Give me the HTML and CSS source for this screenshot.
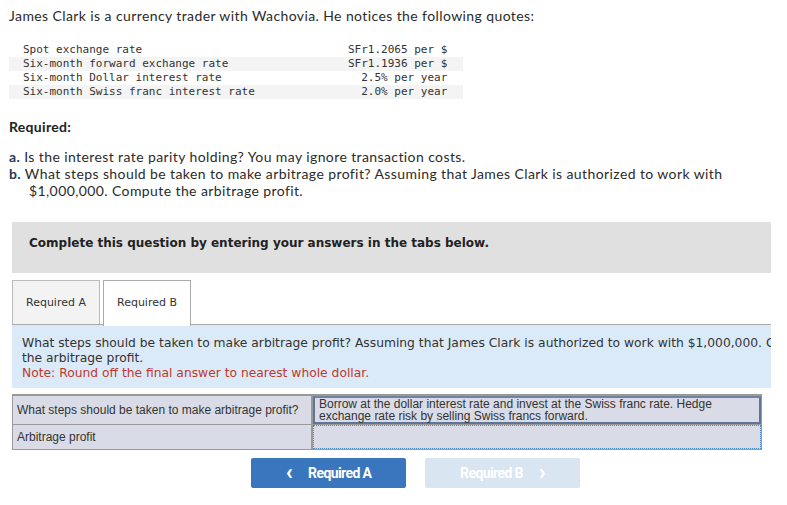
FILE: index.html
```html
<!DOCTYPE html>
<html>
<head>
<meta charset="utf-8">
<link rel="stylesheet" href="styles.css">
</head>
<body>
<div class="page">
  <p class="intro">James Clark is a currency trader with Wachovia. He notices the following quotes:</p>
  <div class="quotes">
    <div class="qrow"><span class="qlabel">Spot exchange rate</span><span class="qval">SFr1.2065 per $</span></div>
    <div class="qrow alt"><span class="qlabel">Six-month forward exchange rate</span><span class="qval">SFr1.1936 per $</span></div>
    <div class="qrow"><span class="qlabel">Six-month Dollar interest rate</span><span class="qval">  2.5% per year</span></div>
    <div class="qrow alt"><span class="qlabel">Six-month Swiss franc interest rate</span><span class="qval">  2.0% per year</span></div>
  </div>
  <p class="req-title">Required:</p>
  <ol class="req-list">
    <li><b>a.</b> Is the interest rate parity holding? You may ignore transaction costs.</li>
    <li><b>b.</b> What steps should be taken to make arbitrage profit? Assuming that James Clark is authorized to work with $1,000,000. Compute the arbitrage profit.</li>
  </ol>
  <div class="panel">
    <div class="instruct">Complete this question by entering your answers in the tabs below.</div>
    <div class="tabs">
      <div class="tab">Required A</div>
      <div class="tab active">Required B</div>
    </div>
    <div class="prompt">
      <div class="prompt-inner">
        What steps should be taken to make arbitrage profit? Assuming that James Clark is authorized to work with $1,000,000. Compute the arbitrage profit.
        <div class="note">Note: Round off the final answer to nearest whole dollar.</div>
      </div>
    </div>
    <div class="answers">
      <div class="arow">
        <div class="acell label">What steps should be taken to make arbitrage profit?</div>
        <div class="acell value sel">Borrow at the dollar interest rate and invest at the Swiss franc rate. Hedge exchange rate risk by selling Swiss francs forward.</div>
      </div>
      <div class="arow">
        <div class="acell label">Arbitrage profit</div>
        <div class="acell value input"></div>
      </div>
    </div>
    <div class="nav">
      <button class="btn prev"><span class="chev">&lsaquo;</span>Required A</button>
      <button class="btn next">Required B<span class="chev">&rsaquo;</span></button>
    </div>
  </div>
</div>
</body>
</html>
```
FILE: styles.css
```css
html, body { margin: 0; padding: 0; background: #fff; }
.page { padding: 7px 0 0 9px; color: #333; font-family: Lato, "Open Sans", sans-serif; }
.intro { margin: 0; font-size: 14px; letter-spacing: 0.4px; line-height: 18px; color: #2b2b2b; }
.quotes { margin-top: 18px; width: 454px; font-family: "DejaVu Sans Mono", monospace; font-size: 11px; color: #333; }
.qrow { display: flex; height: 14px; line-height: 14px; padding-left: 14px; }
.qrow.alt { background: #f4f4f4; }
.qlabel { width: 325px; white-space: pre; }
.qval { white-space: pre; }
.req-title { margin: 19px 0 0; font-weight: bold; font-size: 14px; letter-spacing: 0.3px; line-height: 18px; color: #222; }
.req-list { list-style: none; margin: 12px 0 0; padding: 0; font-size: 14px; letter-spacing: 0.4px; line-height: 17px; color: #2b2b2b; }
.req-list li { padding-left: 20px; text-indent: -20px; width: 730px; }
.req-list b { color: #1f3a5f; }
.panel { margin-top: 23px; margin-left: 3px; width: 759px; }
.instruct { background: #e0e0e0; height: 51px; line-height: 42px; padding-left: 17px; font-family: "DejaVu Sans", Verdana, sans-serif; font-weight: bold; font-size: 12px; color: #222; }
.tabs { display: flex; gap: 3px; margin-top: 7px; border-bottom: 1px solid #aaa; height: 44px; }
.tab { width: 86px; border: 1px solid #bbb; border-bottom: none; background: #f3f3f3; font-family: "DejaVu Sans", Verdana, sans-serif; font-size: 11px; text-align: center; line-height: 44px; color: #333; }
.tab.active { background: #fff; border-color: #aaa; margin-bottom: -1px; height: 45px; }
.prompt { background: #dbeaf8; height: 63px; overflow: hidden; }
.prompt-inner { width: 800px; padding: 11px 0 0 10px; font-family: "DejaVu Sans", Verdana, sans-serif; font-size: 12.3px; line-height: 15px; color: #333; }
.note { color: #c0392b; }
.answers { margin-top: 6px; width: 748px; background: #d9dce6; border: 1px solid #999; border-top-width: 2px; font-family: "Liberation Sans", Arial, sans-serif; font-size: 12px; color: #333; }
.arow { display: flex; }
.arow + .arow { border-top: 1px solid #999; }
.acell { box-sizing: border-box; }
.acell.label { width: 300px; padding: 0 4px; border-right: 2px solid #999; display: flex; align-items: center; }
.acell.value { flex: 1; padding: 0 4px; line-height: 12px; }
.arow:first-child { height: 28px; }
.arow:last-child { height: 24px; }
.acell.sel { border: 2px solid #5f7597; border-top-color: #6f83a3; padding-top: 0; }
.acell.input { border: 1px dotted #4a86c5; }
.nav { display: flex; gap: 19px; margin-top: 8px; margin-left: 239px; }
.btn { width: 155px; height: 30px; border: none; border-radius: 2px; font-family: Roboto, sans-serif; font-weight: bold; font-size: 14px; letter-spacing: -0.6px; color: #fff; display: flex; align-items: center; justify-content: center; gap: 16px; padding: 0; }
.btn.prev { background: #3a76bd; }
.btn.next { background: #dae5f2; }
.chev { font-size: 22px; line-height: 22px; margin-top: -3px; font-weight: 900; }
```
